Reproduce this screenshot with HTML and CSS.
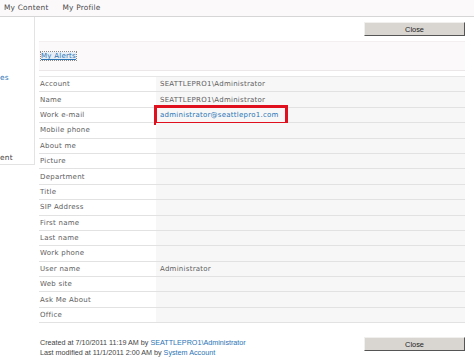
FILE: index.html
```html
<!DOCTYPE html>
<html lang="en">
<head>
  <meta charset="UTF-8">
  <title>User Information</title>
  <link rel="stylesheet" href="styles.css">
</head>
<body>
  <div class="topnav">
    <span class="nav-item">My Content</span>
    <span class="nav-item">My Profile</span>
  </div>

  <div class="page">
    <div class="sidebar">
      <div class="side-link">es</div>
      <div class="side-text">ent</div>
    </div>

    <div class="main">
      <div class="btn-row">
        <button class="close-btn">Close</button>
      </div>

      <div class="alerts">
        <a class="alerts-link" href="#">My Alerts</a>
      </div>

      <div class="props">
        <div class="row"><div class="label">Account</div><div class="value">SEATTLEPRO1\Administrator</div></div>
        <div class="row"><div class="label">Name</div><div class="value">SEATTLEPRO1\Administrator</div></div>
        <div class="row"><div class="label">Work e-mail</div><div class="value"><a class="mail" href="#">administrator@seattlepro1.com</a><span class="highlight"></span></div></div>
        <div class="row"><div class="label">Mobile phone</div><div class="value"></div></div>
        <div class="row"><div class="label">About me</div><div class="value"></div></div>
        <div class="row"><div class="label">Picture</div><div class="value"></div></div>
        <div class="row"><div class="label">Department</div><div class="value"></div></div>
        <div class="row"><div class="label">Title</div><div class="value"></div></div>
        <div class="row"><div class="label">SIP Address</div><div class="value"></div></div>
        <div class="row"><div class="label">First name</div><div class="value"></div></div>
        <div class="row"><div class="label">Last name</div><div class="value"></div></div>
        <div class="row"><div class="label">Work phone</div><div class="value"></div></div>
        <div class="row"><div class="label">User name</div><div class="value">Administrator</div></div>
        <div class="row"><div class="label">Web site</div><div class="value"></div></div>
        <div class="row"><div class="label">Ask Me About</div><div class="value"></div></div>
        <div class="row"><div class="label">Office</div><div class="value"></div></div>
      </div>

      <div class="footer">
        <div class="meta">
          <div>Created at 7/10/2011 11:19 AM by <a href="#">SEATTLEPRO1\Administrator</a></div>
          <div>Last modified at 11/1/2011 2:00 AM by <a href="#">System Account</a></div>
        </div>
        <button class="close-btn">Close</button>
      </div>
    </div>
  </div>
</body>
</html>
```

FILE: styles.css
```css
* {
  box-sizing: border-box;
}
body {
  margin: 0;
  background: #fff;
  color: #5e5e5e;
  font-family: "DejaVu Sans", Verdana, sans-serif;
  font-size: 7px;
  letter-spacing: 0.25px;
  width: 474px;
  height: 363px;
  overflow: hidden;
}
a {
  color: #2a74b6;
  text-decoration: none;
}

/* top navigation */
.topnav {
  height: 17px;
  display: flex;
  align-items: center;
  gap: 14px;
  padding: 0 0 1px 4px;
  background: #fbf9fa;
  border-bottom: 1px solid #d6d6d6;
  color: #4a4a4a;
  font-size: 7.4px;
  letter-spacing: 0.2px;
}

.page {
  display: flex;
}

/* left quick launch, mostly cut off */
.sidebar {
  width: 35px;
  height: 148px;
  flex: none;
  border-right: 1px solid #e3e3e3;
  border-bottom: 1px solid #e3e3e3;
  padding-top: 56px;
  font-size: 7.4px;
}
.side-link {
  color: #2a74b6;
}
.side-text {
  margin-top: 71px;
  color: #444;
}

.main {
  flex: 1;
  padding: 0 9px 0 4px;
}

.btn-row {
  display: flex;
  justify-content: flex-end;
  margin-top: 5px;
}
.close-btn {
  width: 101px;
  height: 14px;
  padding: 0;
  background: #d9d6d1;
  border: 1px solid #f1f0ee;
  border-right-color: #555;
  border-bottom-color: #555;
  font-family: "Liberation Sans", Arial, sans-serif;
  font-size: 7.4px;
  letter-spacing: 0;
  color: #222;
}

.alerts {
  height: 30px;
  margin-top: 5px;
  display: flex;
  align-items: center;
  padding-left: 2px;
  background: #fcf9fa;
  border-top: 1px solid #f3eef0;
  border-bottom: 1px solid #ebe6e8;
}
.alerts-link {
  font-size: 7px;
  text-decoration: underline;
  outline: 1px dotted #8a8a8a;
  background: #e8eef5;
}

/* property table */
.props {
  margin-top: 5px;
  border-top: 1px solid #e6e6e6;
}
.row {
  display: flex;
  height: 15.4px;
  border-bottom: 1px solid #e2e2e2;
}
.label {
  width: 117px;
  padding-left: 1px;
  display: flex;
  align-items: center;
}
.value {
  flex: 1;
  position: relative;
  display: flex;
  align-items: center;
  padding-left: 4px;
  background: #f7f7f7;
}
.highlight {
  position: absolute;
  left: -2px;
  top: -3px;
  width: 134px;
  height: 20px;
  border: 3px solid #e0101e;
}

.footer {
  display: flex;
  justify-content: space-between;
  align-items: flex-start;
  margin-top: 14px;
}
.meta {
  font-family: "Liberation Sans", Arial, sans-serif;
  font-size: 7.2px;
  letter-spacing: 0;
  line-height: 10px;
  color: #444;
  padding: 1px 0 0 1px;
}
```
